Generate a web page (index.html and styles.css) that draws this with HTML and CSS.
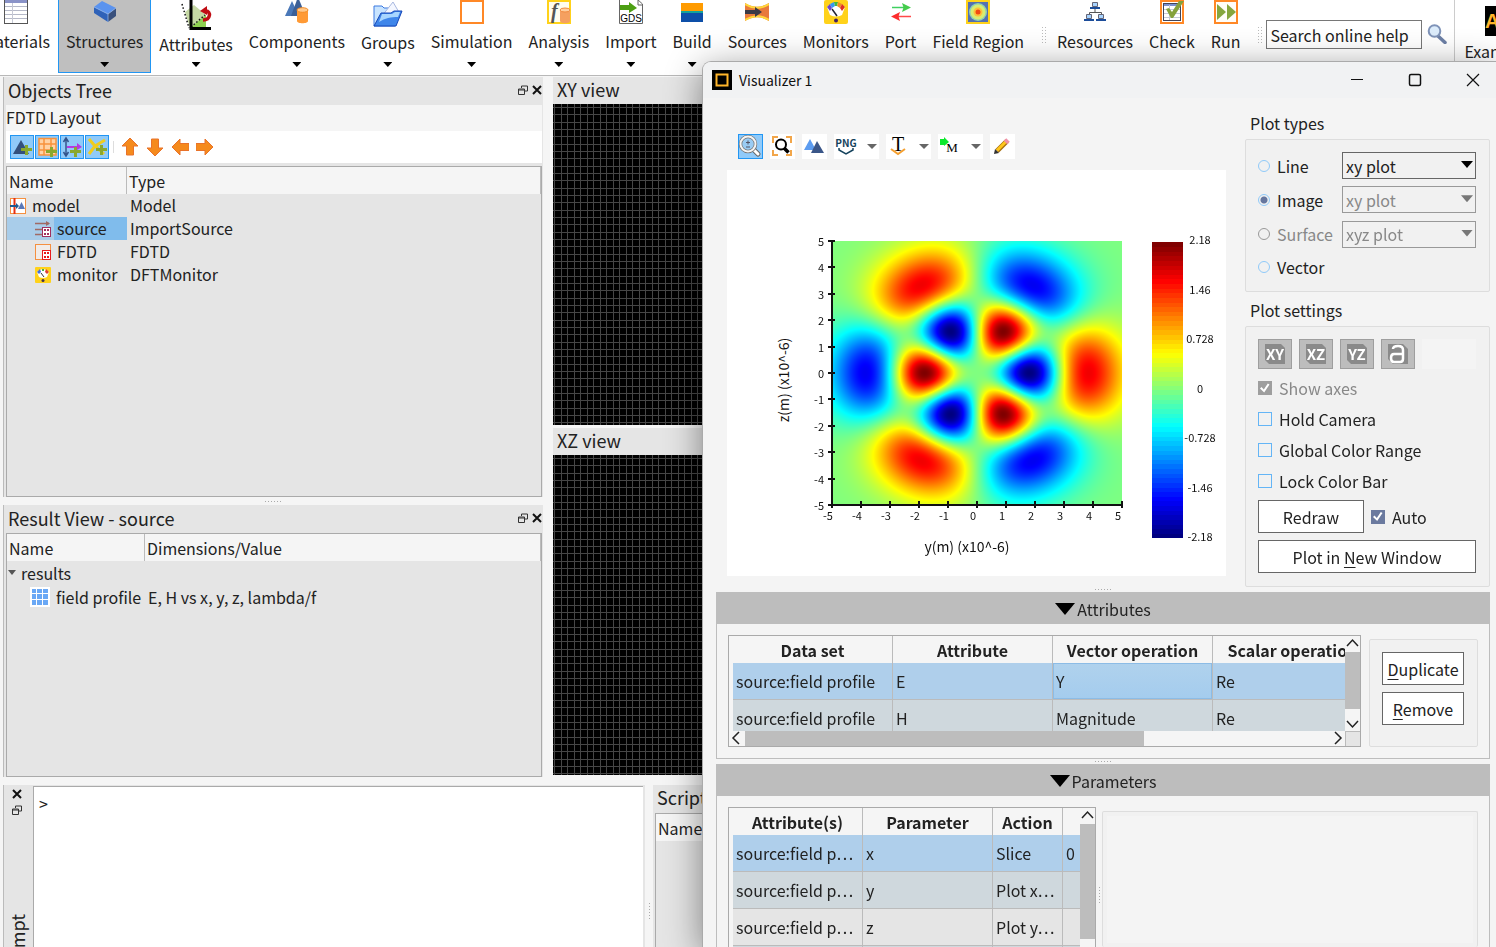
FILE: index.html
```html
<!DOCTYPE html>
<html lang="en">

<head>
    <meta charset="UTF-8">
    <title>FDTD - Visualizer 1</title>
    <link rel="stylesheet" href="styles.css">
</head>

<body>
    <header class="ribbon">
        <button class="tool tool-first">
            <svg width="24" height="24" viewBox="0 0 24 24"><rect x="0.5" y="-3" width="23" height="26.5" fill="#fff" stroke="#555"/><path d="M1 0H23V3H1Z" fill="#8a93c8"/><path d="M1 6.500H23M1 10.500H23M1 14.500H23M1 18.500H23" stroke="#b5b9c8"/><path d="M8.500 3V23" stroke="#c5c8d4"/></svg>
            <span>Materials</span>
        </button>
        <button class="tool active">
            <svg width="24" height="24" viewBox="0 0 24 24"><path d="M1 7L9 1 23 8 15 14Z" fill="#5b93ee"/><path d="M1 7L15 14V22L1 13Z" fill="#2f62b8"/><path d="M15 14L23 8V16L15 22Z" fill="#39507c"/><path d="M1 7L15 14 23 8M15 14V22" fill="none" stroke="#9cc0f5" stroke-width="0.700"/></svg>
            <span>Structures</span><i class="caret"></i>
        </button>
        <button class="tool tall">
            <svg width="32" height="30" viewBox="0 0 32 30"><path d="M10 28L5 12 14 5 26 15V28Z" fill="#c5d8a4"/><path d="M10 28L26 15V28Z" fill="#8fd052"/><path d="M2 4L9 28M11 27L25 15" stroke="#111" stroke-width="1.500" stroke-dasharray="1.500 2"/><path d="M11 0V28.500H31" fill="none" stroke="#000" stroke-width="3"/><path d="M23 20C31 20 31 11 26 11" fill="none" stroke="#c00d14" stroke-width="3.500"/><path d="M20 11L27 6V15Z" fill="#c00d14"/></svg>
            <span>Attributes</span><i class="caret"></i>
        </button>
        <button class="tool">
            <svg width="24" height="24" viewBox="0 0 24 24"><path d="M0 16L7 1 14 16Z" fill="#4a78b8"/><path d="M6 16L13 -3 20 14V16Z" fill="#3b5f96"/><path d="M12 10V21C12 24 23 24 23 21V10Z" fill="#ff9a35"/><ellipse cx="17.500" cy="10" rx="5.500" ry="2.300" fill="#ffc98c" stroke="#f58a20"/></svg>
            <span>Components</span><i class="caret"></i>
        </button>
        <button class="tool tall">
            <svg width="30" height="28" viewBox="0 0 30 28"><path d="M1 8V6H9L11 8H22V26H1Z" fill="#c8e4ff" stroke="#3a78e0"/><path d="M9 16L20 2 27 14 22 20Z" fill="#f4f7ff" stroke="#a8b8e0"/><path d="M8 13H18L21 11H29L23 26H1Z" fill="#3f86ea" stroke="#1648b8"/><path d="M9 14H19L22 12H27L25 17C18 17 12 18 6 22Z" fill="#a8d6ff"/></svg>
            <span>Groups</span><i class="caret"></i>
        </button>
        <button class="tool">
            <svg width="24" height="24" viewBox="0 0 24 24"><rect x="1" y="1" width="22" height="22" fill="#fff" stroke="#ff8826" stroke-width="2"/></svg>
            <span>Simulation</span><i class="caret"></i>
        </button>
        <button class="tool">
            <svg width="24" height="24" viewBox="0 0 24 24"><rect x="1" y="1" width="22" height="22" fill="#fffdf0" stroke="#ffd21a" stroke-width="2"/><text x="4" y="18" class="fx">f</text><path d="M13 10V21C13 24 23 24 23 21V10Z" fill="#f5a060"/><ellipse cx="18" cy="10" rx="5" ry="2" fill="#ffd0a0" stroke="#f08a40"/></svg>
            <span>Analysis</span><i class="caret"></i>
        </button>
        <button class="tool">
            <svg width="24" height="24" viewBox="0 0 24 24"><path d="M0.500 -2V23.500H23.500V4L18 -1Z" fill="#fff" stroke="#666"/><path d="M19 0V5H24" fill="none" stroke="#666"/><path d="M1 5H10V2L18 8 10 13V10H1Z" fill="#4c9f13"/><text x="12" y="22" text-anchor="middle" class="gds">GDS</text></svg>
            <span>Import</span><i class="caret"></i>
        </button>
        <button class="tool">
            <svg width="24" height="24" viewBox="0 0 24 24"><path d="M1 3H23V12H1Z" fill="#ff9b00"/><path d="M1 12H23V22H1Z" fill="#0d4fa8"/><path d="M1 11H23V13H1Z" fill="#13a59a"/></svg>
            <span>Build</span><i class="caret"></i>
        </button>
        <button class="tool">
            <svg width="24" height="24" viewBox="0 0 24 24"><path d="M0 3C8 8 16 8 24 3V21C16 16 8 16 0 21Z" fill="#e87a3c"/><path d="M0 4C8 9 16 9 24 4M0 20C8 15 16 15 24 20" fill="none" stroke="#ffd83a" stroke-width="2"/><path d="M0 10H10V7L17 12 10 17V14H0Z" fill="#3a3a46"/></svg>
            <span>Sources</span>
        </button>
        <button class="tool">
            <svg width="24" height="24" viewBox="0 0 24 24"><rect x="0" y="0" width="24" height="24" rx="2" fill="#ffd21a"/><path d="M3 7Q12 -1 21 7L18 15Q12 18 6 15Z" fill="#fff"/><path d="M3 7L6 4 8 8 6 11Z" fill="#7048c8"/><path d="M6 4L10 2 11 6 8 8Z" fill="#3898f0"/><path d="M10 2H14L13 6H11Z" fill="#40b840"/><path d="M14 2L18 4 16 8 13 6Z" fill="#f09020"/><path d="M18 4L21 7 18 11 16 8Z" fill="#e03020"/><path d="M8 9L13 16" stroke="#223" stroke-width="1.500"/><circle cx="12" cy="20.500" r="2" fill="#402060"/></svg>
            <span>Monitors</span>
        </button>
        <button class="tool">
            <svg width="24" height="24" viewBox="0 0 24 24"><path d="M3 7.500H16" stroke="#3fd060" stroke-width="1.500"/><path d="M13 3L22 7.500 13 12 14.500 7.500Z" fill="#45cc4c"/><path d="M9 16.500H22" stroke="#ff4a4a" stroke-width="1.500"/><path d="M11 12L2 16.500 11 21 9.500 16.500Z" fill="#fc2d2d"/></svg>
            <span>Port</span>
        </button>
        <button class="tool">
            <svg width="24" height="24" viewBox="0 0 24 24"><rect x="1" y="1" width="22" height="22" fill="#5470b0" stroke="#ffd21a" stroke-width="2"/><circle cx="12" cy="12" r="9" fill="#8fd0b0"/><circle cx="12" cy="12" r="7.500" fill="#d8ec70"/><circle cx="12" cy="12" r="4.500" fill="#ffbe3a"/><circle cx="12" cy="12" r="2.500" fill="#f04a12"/></svg>
            <span>Field Region</span>
        </button>
        <i class="grip"></i>
        <button class="tool">
            <svg width="24" height="24" viewBox="0 0 24 24"><path d="M12 9V12.500M6.500 15V12.500H18.500V15" fill="none" stroke="#555"/><path d="M9.500 2.500H14.500V6.500H9.500ZM3.500 14.500H8.500V18.500H3.500ZM15.500 14.500H20.500V18.500H15.500Z" fill="#a8d4ff" stroke="#667"/><path d="M7 8H17M1 20H11M13 20H23" stroke="#1c4d9a" stroke-width="2"/></svg>
            <span>Resources</span>
        </button>
        <button class="tool">
            <svg width="24" height="24" viewBox="0 0 24 24"><rect x="1" y="1" width="22" height="22" fill="#fff" stroke="#ff8826" stroke-width="2"/><rect x="3.500" y="3.500" width="17" height="17" fill="#fff" stroke="#445"/><path d="M4 5H20" stroke="#7a90d0" stroke-width="2"/><path d="M4 9.500H20M4 13.500H20M4 17.500H20M9.500 5V20" stroke="#c5cad8"/><path d="M6 9L9 8 12 12 19 1H24L13 18H11Z" fill="#85a23c"/></svg>
            <span>Check</span>
        </button>
        <button class="tool">
            <svg width="24" height="24" viewBox="0 0 24 24"><rect x="1" y="1" width="22" height="22" fill="#fffdf8" stroke="#ff8826" stroke-width="2"/><path d="M3 4L12 12 3 20ZM13 4L22 12 13 20Z" fill="#86a63e"/></svg>
            <span>Run</span>
        </button>
        <i class="grip"></i>
        <input class="help-search" type="text" value="Search online help" aria-label="Search online help">
        <button class="lens" aria-label="Search">
            <svg width="20" height="20" viewBox="0 0 20 20"><path d="M11 12L18 18.500" stroke="#6c7fa5" stroke-width="3.500" stroke-linecap="round"/><circle cx="7.500" cy="7" r="5.800" fill="#dcecfb" stroke="#7f93b8" stroke-width="2"/></svg>
        </button>
        <button class="tool examples">
            <svg width="30" height="30" viewBox="0 0 30 30"><rect width="30" height="30" fill="#000"/><text x="0" y="22" class="logo-a">A</text></svg>
            <span>Examples</span>
        </button>
    </header>

    <main class="desktop">
        <div class="work-area">
            <div class="docks">
                <section class="dock tree-dock">
                    <div class="dock-title">
                        <h2>Objects Tree</h2>
                        <button class="dock-btn" aria-label="Float"><svg width="10" height="10" viewBox="0 0 10 10"><path d="M3.500 3V1H9.500V6H7" fill="none" stroke="#333"/><path d="M0.500 4H6.500V9.500H0.500ZM0.500 5H6.500" fill="none" stroke="#333"/></svg></button>
                        <button class="dock-btn" aria-label="Close"><svg width="10" height="10" viewBox="0 0 10 10"><path d="M1 1L9 9M9 1L1 9" stroke="#111" stroke-width="2"/></svg></button>
                    </div>
                    <p class="layout-mode">FDTD Layout</p>
                    <div class="tree-tools">
                        <button class="tree-btn on" aria-label="Structures"><svg width="23" height="22" viewBox="0 0 23 22"><path d="M2 18L10 4 18 18Z" fill="#34507c"/><path d="M14 9H17V12H21V15H17V19H14V15H10V12H14Z" fill="#8aa82e"/></svg></button>
                        <button class="tree-btn on" aria-label="Simulation"><svg width="23" height="22" viewBox="0 0 23 22"><path d="M3 2.500H20V19H3ZM8 2V19M15 2V19M3 8H20M3 14H20" fill="#ffd2a4" stroke="#f8923c" stroke-width="1.500"/><path d="M14 11H17V14H21V17H17V21H14V17H10V14H14Z" fill="#8aa82e"/></svg></button>
                        <button class="tree-btn on" aria-label="Sources"><svg width="23" height="22" viewBox="0 0 23 22"><path d="M5 3V19M2.500 6L5 2 7.500 6M2.500 16L5 20 7.500 16" fill="none" stroke="#34548c" stroke-width="1.500"/><path d="M6 11H18" stroke="#b838e0" stroke-width="2"/><path d="M16 7L21 11 16 14Z" fill="#b838e0"/><path d="M13 11H16V14H20V17H16V21H13V17H9V14H13Z" fill="#8aa82e"/></svg></button>
                        <button class="tree-btn on" aria-label="Monitors"><svg width="23" height="22" viewBox="0 0 23 22"><path d="M3 3L9 10 19 4M3 18L9 10 18 18" fill="none" stroke="#f0cc20" stroke-width="3"/><path d="M14 9H17V12H21V15H17V19H14V15H10V12H14Z" fill="#8aa82e"/></svg></button>
                        <i class="tree-sep"></i>
                        <button class="tree-btn" aria-label="Up"><svg width="18" height="20" viewBox="0 0 18 20"><path d="M9 1L17 9H12.500V18H5.500V9H1Z" fill="#f58a1c" stroke="#e8722a"/></svg></button>
                        <button class="tree-btn" aria-label="Down"><svg width="18" height="20" viewBox="0 0 18 20"><path d="M9 19L17 11H12.500V2H5.500V11H1Z" fill="#f58a1c" stroke="#e8722a"/></svg></button>
                        <button class="tree-btn" aria-label="Left"><svg width="18" height="18" viewBox="0 0 18 18"><path d="M1 9L9 1V5.500H18V12.500H9V17Z" fill="#f58a1c" stroke="#e8722a"/></svg></button>
                        <button class="tree-btn" aria-label="Right"><svg width="18" height="18" viewBox="0 0 18 18"><path d="M17 9L9 1V5.500H0V12.500H9V17Z" fill="#f58a1c" stroke="#e8722a"/></svg></button>
                    </div>
                    <div class="tree-box">
                        <table class="tree">
                            <colgroup><col class="col-name"><col></colgroup>
                            <thead>
                                <tr><th>Name</th><th>Type</th></tr>
                            </thead>
                            <tbody>
                                <tr>
                                    <td><div class="node"><svg width="16" height="16" viewBox="0 0 16 16"><rect x="0.500" y="0.500" width="15" height="15" fill="#fff" stroke="#f59040"/><path d="M4.500 0V16" stroke="#e83010" stroke-width="2"/><path d="M0 8H8" stroke="#205a90" stroke-width="2"/><path d="M6 5L9 8 6 11Z" fill="#205a90"/><path d="M8 11L11.500 4 15 11Z" fill="#5a78b8"/></svg><span>model</span></div></td>
                                    <td>Model</td>
                                </tr>
                                <tr class="selected">
                                    <td><div class="node child"><svg width="16" height="16" viewBox="0 0 16 16"><path d="M0 2.500H14M0 8.500H8M0 13.500H7" stroke="#a06a64" stroke-width="1.500"/><path d="M11 0L15 2.500 11 5Z" fill="#a06a64"/><rect x="7.500" y="6.500" width="8" height="9" fill="#fff" stroke="#a03060"/><path d="M9 8H11V10H9ZM12 8H14V10H12ZM9 12H11V14H9ZM12 12H14V14H12Z" fill="#a03060"/></svg><span>source</span></div></td>
                                    <td>ImportSource</td>
                                </tr>
                                <tr>
                                    <td><div class="node child"><svg width="16" height="16" viewBox="0 0 16 16"><rect x="0.500" y="0.500" width="15" height="15" fill="#f2ece8" stroke="#f59040"/><rect x="7.500" y="6.500" width="8" height="9" fill="#fff" stroke="#e81c1c"/><path d="M9 8H11V10H9ZM12 8H14V10H12ZM9 12H11V14H9ZM12 12H14V14H12Z" fill="#e81c1c"/></svg><span>FDTD</span></div></td>
                                    <td>FDTD</td>
                                </tr>
                                <tr>
                                    <td><div class="node child"><svg width="16" height="16" viewBox="0 0 16 16"><rect width="16" height="16" rx="1" fill="#ffd21a"/><path d="M2 5Q8 -1 14 5L12 10Q8 12 4 10Z" fill="#fff"/><path d="M2 5L5 2 6 5 4 7Z" fill="#4a70d8"/><path d="M11 2L14 5 12 7 10 5Z" fill="#e04030"/><path d="M7 2H9V4H7Z" fill="#48b048"/><path d="M6 6L9 10" stroke="#333"/><circle cx="8" cy="13.500" r="1.500" fill="#403050"/></svg><span>monitor</span></div></td>
                                    <td>DFTMonitor</td>
                                </tr>
                            </tbody>
                        </table>
                    </div>
                </section>
                <i class="dots"></i>
                <section class="dock result-dock">
                    <div class="dock-title">
                        <h2>Result View - source</h2>
                        <button class="dock-btn" aria-label="Float"><svg width="10" height="10" viewBox="0 0 10 10"><path d="M3.500 3V1H9.500V6H7" fill="none" stroke="#333"/><path d="M0.500 4H6.500V9.500H0.500ZM0.500 5H6.500" fill="none" stroke="#333"/></svg></button>
                        <button class="dock-btn" aria-label="Close"><svg width="10" height="10" viewBox="0 0 10 10"><path d="M1 1L9 9M9 1L1 9" stroke="#111" stroke-width="2"/></svg></button>
                    </div>
                    <div class="tree-box">
                        <table class="tree results">
                            <colgroup><col class="col-name"><col></colgroup>
                            <thead>
                                <tr><th>Name</th><th>Dimensions/Value</th></tr>
                            </thead>
                            <tbody>
                                <tr>
                                    <td><div class="node root"><svg width="8" height="6" viewBox="0 0 8 6"><path d="M0 0H8L4 5Z" fill="#555"/></svg><span>results</span></div></td>
                                    <td></td>
                                </tr>
                                <tr>
                                    <td><div class="node leaf"><svg width="20" height="20" viewBox="0 0 20 20"><rect width="20" height="20" fill="#fff"/><path d="M2 2H6V6H2ZM7 2H12V6H7ZM13 2H18V6H13ZM2 7H6V12H2ZM7 7H12V12H7ZM13 7H18V12H13ZM2 13H6V18H2ZM7 13H12V18H7ZM13 13H18V18H13Z" fill="#6aa8f5"/></svg><span>field profile</span></div></td>
                                    <td>E, H vs x, y, z, lambda/f</td>
                                </tr>
                            </tbody>
                        </table>
                    </div>
                </section>
            </div>
            <div class="views">
                <section class="view">
                    <h2>XY view</h2>
                    <div class="grid-canvas"></div>
                </section>
                <section class="view">
                    <h2>XZ view</h2>
                    <div class="grid-canvas"></div>
                </section>
            </div>
        </div>

        <div class="console-area">
            <section class="prompt">
                <div class="prompt-strip">
                    <button class="dock-btn" aria-label="Close"><svg width="10" height="10" viewBox="0 0 10 10"><path d="M1 1L9 9M9 1L1 9" stroke="#111" stroke-width="2"/></svg></button>
                    <button class="dock-btn" aria-label="Float"><svg width="10" height="10" viewBox="0 0 10 10"><path d="M3.500 3V1H9.500V6H7" fill="none" stroke="#333"/><path d="M0.500 4H6.500V9.500H0.500ZM0.500 5H6.500" fill="none" stroke="#333"/></svg></button>
                    <span class="prompt-title">Script Prompt</span>
                </div>
                <textarea class="prompt-text" aria-label="Script Prompt">&gt;</textarea>
            </section>
            <i class="dots dots-v"></i>
            <section class="workspace">
                <h2>Script Workspace</h2>
                <table class="workspace-table">
                    <thead><tr><th>Name</th></tr></thead>
                    <tbody><tr><td></td></tr></tbody>
                </table>
            </section>
        </div>

        <section class="window">
            <div class="titlebar">
                <svg width="20" height="20" viewBox="0 0 20 20"><rect width="20" height="20" fill="#000"/><rect x="4.500" y="4.500" width="11" height="11" fill="none" stroke="#ffb52a" stroke-width="2"/></svg>
                <h1>Visualizer 1</h1>
                <button class="win-btn" aria-label="Minimize"><svg width="14" height="14" viewBox="0 0 14 14"><path d="M1 6.500H13" stroke="#111"/></svg></button>
                <button class="win-btn" aria-label="Maximize"><svg width="14" height="14" viewBox="0 0 14 14"><rect x="1.500" y="1.500" width="11" height="11" rx="1.500" fill="none" stroke="#111" stroke-width="1.500"/></svg></button>
                <button class="win-btn" aria-label="Close"><svg width="14" height="14" viewBox="0 0 14 14"><path d="M1 1L13 13M13 1L1 13" stroke="#111" stroke-width="1.200"/></svg></button>
            </div>

            <div class="plot-row">
                <div class="plot-side">
                    <div class="plot-tools">
                        <button class="ptool on" aria-label="Zoom"><svg width="25" height="25" viewBox="0 0 25 25"><path d="M14 14L20 20" stroke="#666" stroke-width="5" stroke-linecap="round"/><path d="M14 14L20 20" stroke="#fff" stroke-width="3" stroke-linecap="round"/><circle cx="10" cy="10" r="7.500" fill="#9accf4" stroke="#777" stroke-width="3.500"/><circle cx="10" cy="10" r="7.500" fill="none" stroke="#f4f4f4" stroke-width="2"/><path d="M8 8.500H12M10 6.500V10.500M8 13H12" stroke="#556"/></svg></button>
                        <button class="ptool" aria-label="Zoom extent"><svg width="25" height="25" viewBox="0 0 25 25"><path d="M3 9V3H8M16 3H21V9M21 16V21H16M8 21H3V16" fill="none" stroke="#f2a64a" stroke-width="2"/><circle cx="11" cy="10.500" r="5" fill="none" stroke="#000" stroke-width="2"/><path d="M14 14L18.500 18.500" stroke="#000" stroke-width="3.500"/></svg></button>
                        <button class="ptool" aria-label="Objects"><svg width="25" height="25" viewBox="0 0 25 25"><path d="M2 16L8 5 14 16Z" fill="#5c9cf0"/><path d="M9 19L15 7 22 19Z" fill="#3a5688"/></svg></button>
                        <button class="ptool wide" aria-label="Export picture"><svg width="45" height="25" viewBox="0 0 45 25"><text x="12" y="13" text-anchor="middle" class="png">PNG</text><path d="M5 14V16L12 20 19 16V14" fill="none" stroke="#14425c" stroke-width="1.500"/><path d="M33 10H43L38 15Z" fill="#666"/></svg></button>
                        <button class="ptool wide" aria-label="Export text"><svg width="45" height="25" viewBox="0 0 45 25"><text x="12" y="17" text-anchor="middle" class="ttt">T</text><path d="M5 15L12 20 19 15" fill="none" stroke="#f5a030" stroke-width="2"/><path d="M33 10H43L38 15Z" fill="#666"/></svg></button>
                        <button class="ptool wide" aria-label="Export to Matlab"><svg width="45" height="25" viewBox="0 0 45 25"><path d="M2 5H6V3L11 8 6 12V11H2Z" fill="#0ce82c"/><text x="14" y="18" text-anchor="middle" class="mmm">M</text><path d="M33 10H43L38 15Z" fill="#666"/></svg></button>
                        <button class="ptool" aria-label="Edit"><svg width="25" height="25" viewBox="0 0 25 25"><path d="M7 17L17 7" stroke="#a87010" stroke-width="5"/><path d="M7 16.500L16 7.500" stroke="#ffc61c" stroke-width="3"/><path d="M15.500 8.500L18 6" stroke="#f090a8" stroke-width="5"/><path d="M4 20L5 15 9 19Z" fill="#333"/></svg></button>
                    </div>
                    <div class="plot">
                        <svg id="chart" width="499" height="406" viewBox="0 0 499 406">
                            <foreignObject x="105" y="71" width="290" height="264"><canvas id="field" width="290" height="264"></canvas></foreignObject>
                            <path class="axis" d="M105 71V335H395"/>
                            <g id="ticks"></g>
                            <g id="colorbar"></g>
                            <text class="axis-name" x="240" y="382" text-anchor="middle">y(m) (x10^-6)</text>
                            <text class="axis-name" transform="translate(62 210) rotate(-90)" text-anchor="middle">z(m) (x10^-6)</text>
                        </svg>
                    </div>
                </div>
                <form class="plot-options">
                    <h3>Plot types</h3>
                    <div class="group types">
                        <label><input type="radio" name="type">Line</label>
                        <div class="pick"><select aria-label="Line plot"><option>xy plot</option></select></div>
                        <label><input type="radio" name="type" checked>Image</label>
                        <div class="pick off"><select aria-label="Image plot" disabled><option>xy plot</option></select></div>
                        <label class="off"><input type="radio" name="type" disabled>Surface</label>
                        <div class="pick off"><select aria-label="Surface plot" disabled><option>xyz plot</option></select></div>
                        <label><input type="radio" name="type">Vector</label>
                    </div>
                    <h3>Plot settings</h3>
                    <div class="group settings">
                        <div class="planes">
                            <button type="button" class="plane" disabled><span>XY</span></button>
                            <button type="button" class="plane" disabled><span>XZ</span></button>
                            <button type="button" class="plane" disabled><span>YZ</span></button>
                            <button type="button" class="plane" aria-label="Lock" disabled><svg width="20" height="20" viewBox="0 0 20 20"><path d="M0 0H15L20 5V20H5L0 15Z" fill="#8a8a8a"/><path d="M5 5Q5 2 10 2Q15 2 15 6V15Q15 18 12 18H6Q3 18 3 14Q3 10 6 10H15" fill="none" stroke="#fff" stroke-width="2.500"/></svg></button>
                            <i class="plane-blank"></i>
                        </div>
                        <label class="off"><input type="checkbox" checked disabled>Show axes</label>
                        <label><input type="checkbox">Hold Camera</label>
                        <label><input type="checkbox">Global Color Range</label>
                        <label><input type="checkbox">Lock Color Bar</label>
                        <div class="redraw">
                            <button type="button" class="btn">Redraw</button>
                            <label><input type="checkbox" checked>Auto</label>
                        </div>
                        <button type="button" class="btn">Plot in <u>N</u>ew Window</button>
                    </div>
                </form>
            </div>

            <i class="dots"></i>
            <section class="panel attributes">
                <button class="panel-head"><svg width="20" height="12" viewBox="0 0 20 12"><path d="M0 0H20L10 12Z"/></svg>Attributes</button>
                <div class="panel-body">
                    <div class="sheet">
                        <div class="sheet-view">
                            <table class="data attr-table">
                                <thead>
                                    <tr><th>Data set</th><th>Attribute</th><th>Vector operation</th><th>Scalar operation</th></tr>
                                </thead>
                                <tbody>
                                    <tr class="picked"><td>source:field profile</td><td>E</td><td class="current">Y</td><td>Re</td></tr>
                                    <tr class="alt"><td>source:field profile</td><td>H</td><td>Magnitude</td><td>Re</td></tr>
                                </tbody>
                            </table>
                        </div>
                        <div class="vbar"><svg width="15" height="16" viewBox="0 0 15 16"><path d="M2 10L7.500 4 13 10"/></svg><i></i><svg width="15" height="22" viewBox="0 0 15 22"><path d="M2 12L7.500 18 13 12"/></svg></div>
                        <div class="hbar"><svg width="16" height="15" viewBox="0 0 16 15"><path d="M10 1L4 7 10 13"/></svg><i></i><svg width="16" height="15" viewBox="0 0 16 15"><path d="M6 1L12 7 6 13"/></svg></div>
                        <div class="corner"></div>
                    </div>
                    <div class="group set-buttons">
                        <button class="btn"><u>D</u>uplicate</button>
                        <button class="btn"><u>R</u>emove</button>
                    </div>
                </div>
            </section>
            <i class="dots"></i>
            <section class="panel parameters">
                <button class="panel-head"><svg width="20" height="12" viewBox="0 0 20 12"><path d="M0 0H20L10 12Z"/></svg>Parameters</button>
                <div class="panel-body">
                    <div class="sheet">
                        <div class="sheet-view">
                            <table class="data param-table">
                                <thead>
                                    <tr><th>Attribute(s)</th><th>Parameter</th><th>Action</th><th></th></tr>
                                </thead>
                                <tbody>
                                    <tr class="picked"><td>source:field p…</td><td>x</td><td>Slice</td><td>0</td></tr>
                                    <tr class="alt"><td>source:field p…</td><td>y</td><td>Plot x…</td><td></td></tr>
                                    <tr><td>source:field p…</td><td>z</td><td>Plot y…</td><td></td></tr>
                                    <tr class="alt"><td></td><td></td><td></td><td></td></tr>
                                </tbody>
                            </table>
                        </div>
                        <div class="vbar"><svg width="15" height="16" viewBox="0 0 15 16"><path d="M2 10L7.500 4 13 10"/></svg><i></i></div>
                    </div>
                    <i class="dots dots-v"></i>
                    <div class="group slice-box"></div>
                </div>
            </section>
        </section>
    </main>

    <script src="script.js"></script>
</body>

</html>
```
FILE: styles.css
```css
* {
    box-sizing: border-box;
}

body {
    margin: 0;
    height: 100vh;
    display: flex;
    flex-direction: column;
    overflow: hidden;
    background: #f5f5f5;
    color: #222;
    font-family: "Noto Sans CJK KR", "Noto Sans", sans-serif;
    font-size: 16px;
    line-height: 24px;
}

button, input, select, textarea {
    font: inherit;
    color: inherit;
    border-radius: 0;
}

button {
    padding: 0;
    border: none;
    background: none;
    white-space: nowrap;
}

h1, h2, h3, p {
    margin: 0;
    font-size: inherit;
    font-weight: normal;
}

svg {
    display: block;
    flex: none;
}

i {
    flex: none;
}

/* ribbon */
.ribbon {
    display: flex;
    flex: none;
    height: 76px;
    overflow: hidden;
    background: #fff;
    border-bottom: 1px solid #b8b8b8;
}

.tool {
    display: flex;
    flex: none;
    flex-direction: column;
    align-items: center;
    gap: 5px;
    height: 73px;
    padding: 0 7px;
    border: 1px solid transparent;
    border-top: none;
}

.tool.tall {
    gap: 2px;
}

.tool-first {
    margin-left: -26px;
}

.tool.active {
    background: #bfbfbf;
    border-color: #2196f3;
}

.caret {
    width: 9px;
    height: 5px;
    margin: auto 0 5px;
    background: #000;
    clip-path: polygon(0 0, 100% 0, 50% 100%);
}

.grip {
    width: 5px;
    height: 18px;
    margin: 26px 3px 0 9px;
    background-image: radial-gradient(circle, #bbb 1px, transparent 1px);
    background-size: 3px 3px;
}

.help-search {
    width: 156px;
    height: 29px;
    margin: 20px 5px 0 1px;
    padding: 0 3px;
    border: 1px solid #777;
    background: #fff;
}

.lens {
    height: 20px;
    margin: 24px 7px 0 0;
}

.tool.examples {
    flex: none;
    gap: 3px;
    height: 76px;
    padding: 6px 9px 0;
    border: none;
    border-left: 1px solid #ccc;
}

.fx {
    font: italic bold 20px "Liberation Serif", serif;
    fill: #555;
}

.gds {
    font: 10px "Liberation Sans", sans-serif;
}

.logo-a {
    font: bold 20px "Liberation Sans", sans-serif;
    fill: #ffb52a;
}

/* docks */
.desktop {
    display: flex;
    flex: 1;
    flex-direction: column;
    min-height: 0;
    padding-left: 3px;
    padding-top: 1px;
}

.work-area {
    display: flex;
    flex: none;
    gap: 10px;
    height: 700px;
}

.docks {
    display: flex;
    flex-direction: column;
    width: 540px;
}

.dock {
    display: flex;
    flex-direction: column;
    padding: 0 1px 0 2px;
    background: #e5e5e5;
    border-left: 1px solid #bbb;
}

.tree-dock {
    height: 420px;
}

.result-dock {
    flex: 1;
}

.dock-title {
    display: flex;
    flex: none;
    align-items: center;
    gap: 4px;
    height: 28px;
    padding: 0 0 2px 2px;
}

.dock-title h2 {
    flex: 1;
}

.dock h2, .view h2, .workspace h2 {
    font-size: 18px;
}

.layout-mode {
    flex: none;
    height: 26px;
    background: #f5f5f5;
}

.tree-tools {
    display: flex;
    flex: none;
    align-items: center;
    gap: 1px;
    height: 32px;
    padding-left: 4px;
    background: #fff;
}

.tree-btn {
    display: flex;
    align-items: center;
    justify-content: center;
    width: 24px;
    height: 24px;
}

.tree-btn.on {
    background: #90caf9;
    border: 1px solid #2196f3;
}

.tree-sep {
    width: 1px;
    height: 12px;
    margin: 0 3px;
    background: #ddd;
}

.tree-box {
    flex: 1;
    border: 1px solid #aaa;
    overflow: hidden;
}

.tree-dock .tree-box {
    margin-top: 3px;
}

.tree {
    width: 100%;
    table-layout: fixed;
    border-spacing: 0;
    white-space: nowrap;
}

.tree .col-name {
    width: 120px;
}

.results .col-name {
    width: 138px;
}

.tree th {
    height: 27px;
    padding: 0 2px;
    text-align: left;
    font-weight: normal;
    background: #f5f5f5;
    border-right: 1px solid #bbb;
}

.tree td {
    height: 23px;
    padding: 0 3px;
    line-height: 23px;
}

.results td {
    height: 24px;
}

.node {
    display: flex;
    align-items: center;
    gap: 6px;
}

.node.child {
    margin-left: -3px;
    padding-left: 28px;
    gap: 3px;
}

.node.child span {
    flex: 1;
    padding-left: 3px;
}

.selected .node.child {
    margin-right: -3px;
    background: #a9cdea;
}

.selected .node.child span {
    background: #80bcec;
}

.node.root {
    margin-left: -2px;
    gap: 5px;
}

.node.leaf {
    padding-left: 20px;
}

.dots {
    align-self: center;
    width: 17px;
    height: 1px;
    margin: 4px 0 3px;
    background: repeating-linear-gradient(90deg, #aaa 0 1px, transparent 1px 3px);
}

.dots-v {
    width: 1px;
    height: 17px;
    margin: 0 4px;
    background: repeating-linear-gradient(#aaa 0 1px, transparent 1px 3px);
}

/* views */
.views {
    display: flex;
    flex: 1;
    flex-direction: column;
    gap: 3px;
    padding-bottom: 2px;
}

.view {
    display: flex;
    flex: 1;
    flex-direction: column;
    background: #e5e5e5;
}

.view h2 {
    height: 27px;
    padding-left: 4px;
    line-height: 25px;
}

.grid-canvas {
    flex: 1;
    background:
        linear-gradient(90deg, #464646 0 1px, transparent 1px 7px, #464646 7px 8px, transparent 8px) 1px 0 / 13px 22px,
        linear-gradient(#464646 0 1px, transparent 1px 7px, #464646 7px 8px, transparent 8px 15px, #464646 15px 16px, transparent 16px) 0 3px / 13px 22px,
        #000;
}

/* script prompt */
.console-area {
    display: flex;
    flex: 1;
    min-height: 0;
    margin-top: 8px;
}

.prompt {
    display: flex;
    width: 642px;
    background: #e5e5e5;
    border-left: 1px solid #bbb;
}

.prompt-strip {
    display: flex;
    flex-direction: column;
    align-items: center;
    gap: 6px;
    width: 29px;
    padding: 4px 4px 0 0;
    overflow: hidden;
}

.dock-btn {
    height: 10px;
}

.prompt-title {
    margin-top: 93px;
    writing-mode: vertical-rl;
    transform: rotate(180deg);
    font-size: 18px;
    white-space: nowrap;
}

.prompt-text {
    flex: 1;
    margin: 1px 2px 0 0;
    padding: 4px 5px;
    border: 1px solid #aaa;
    border-width: 1px 0 0 1px;
    background: #fff;
    resize: none;
}

.console-area > .dots-v {
    align-self: flex-start;
    margin: 118px 3px 0 4px;
}

.workspace {
    flex: 1;
    min-height: 0;
    padding-left: 2px;
    background: #e5e5e5;
}

.workspace h2 {
    height: 28px;
    padding-left: 2px;
    line-height: 25px;
}

.workspace-table {
    width: 100%;
    border: 1px solid #aaa;
    border-spacing: 0;
}

.workspace-table th {
    height: 27px;
    padding: 0 2px;
    text-align: left;
    font-weight: normal;
    background: #f5f5f5;
}

.workspace-table td {
    height: 160px;
}

/* visualizer window */
.window {
    position: absolute;
    left: 702px;
    right: 0;
    top: 61px;
    bottom: 0;
    display: flex;
    flex-direction: column;
    padding: 0 6px 0 13px;
    overflow: hidden;
    background: #f4f4f4;
    border: 1px solid #aaa;
    border-width: 1px 0 0 1px;
    border-radius: 9px 0 0 0;
    box-shadow: 0 8px 36px rgba(0, 0, 0, 0.45);
}

.titlebar {
    display: flex;
    flex: none;
    align-items: center;
    height: 36px;
    margin: 0 -6px 0 -13px;
    padding-left: 9px;
    background: #f1f2f3;
}

.titlebar h1 {
    flex: 1;
    margin-left: 7px;
    font-size: 14px;
    color: #111;
}

.win-btn {
    display: flex;
    align-items: center;
    justify-content: center;
    width: 58px;
    height: 36px;
}

.win-btn:last-child {
    margin-right: -6px;
}

.plot-row {
    display: flex;
    flex: none;
    gap: 19px;
    padding: 13px 0 0 11px;
}

.plot-side {
    display: flex;
    flex: 1;
    flex-direction: column;
    min-width: 0;
}

.plot-tools {
    display: flex;
    gap: 7px;
    margin: 23px 0 11px 11px;
}

.ptool {
    width: 25px;
    height: 25px;
    background: #fff;
}

.ptool.wide {
    width: 45px;
}

.ptool.on {
    background: #90caf9;
    outline: 1px solid #2196f3;
    outline-offset: -1px;
}

.png {
    font: bold 10px "Noto Sans CJK KR", sans-serif;
    fill: #14425c;
}

.ttt {
    font: 20px "Liberation Serif", serif;
}

.mmm {
    font: 13px "Liberation Serif", serif;
}

.plot {
    background: #fff;
}

.axis {
    fill: none;
    stroke: #111;
    stroke-width: 2;
}

.tick {
    font-size: 11px;
    fill: #111;
}

.axis-name {
    font-size: 14px;
    fill: #111;
}

foreignObject canvas {
    display: block;
}

.plot-options {
    display: flex;
    flex-direction: column;
    width: 245px;
}

.plot-options h3 {
    height: 28px;
    padding-left: 5px;
    line-height: 25px;
}

.plot-options .types {
    margin-bottom: 6px;
}

.group {
    border: 1px solid #ddd;
    border-radius: 2px;
    background: #f1f1f1;
}

.types {
    display: grid;
    grid-template-columns: 78px 1fr;
    gap: 7px 6px;
    height: 153px;
    padding: 12px 13px 12px 12px;
}

label {
    display: flex;
    align-items: center;
    gap: 7px;
}

label.off, .pick.off {
    color: #888;
}

input[type="radio"] {
    appearance: none;
    width: 12px;
    height: 12px;
    margin: 0;
    border: 1px solid #90caf9;
    border-radius: 50%;
}

input[type="radio"]:checked {
    background: radial-gradient(circle, #66779f 3px, transparent 4px);
}

input[type="radio"]:disabled {
    border-color: #999;
}

.pick {
    position: relative;
}

.pick::after {
    content: "";
    position: absolute;
    right: 3px;
    top: 9px;
    width: 12px;
    height: 7px;
    background: #000;
    clip-path: polygon(0 0, 100% 0, 50% 100%);
    pointer-events: none;
}

.pick.off::after {
    background: #777;
}

.pick select {
    display: block;
    appearance: none;
    width: 100%;
    height: 27px;
    padding: 0 3px;
    border: 1px solid #666;
    background: transparent;
    opacity: 1;
}

.pick.off select {
    border-color: #999;
}

.settings {
    display: flex;
    flex-direction: column;
    gap: 7px;
    padding: 12px 13px 13px 12px;
}

.planes {
    display: flex;
    gap: 7px;
}

.plane {
    display: flex;
    align-items: center;
    justify-content: center;
    width: 34px;
    height: 30px;
    background: #bdbdbd;
    border: 1px solid #9e9e9e;
}

.plane span {
    width: 20px;
    height: 20px;
    background: #8a8a8a;
    clip-path: polygon(0 0, 80% 0, 100% 20%, 100% 100%, 20% 100%, 0 80%);
    color: #fff;
    font-size: 15px;
    font-weight: bold;
    line-height: 20px;
}

.plane-blank {
    flex: 1;
    background: #f4f4f4;
}

input[type="checkbox"] {
    appearance: none;
    width: 14px;
    height: 14px;
    margin: 0;
    border: 1px solid #64b5f6;
}

input[type="checkbox"]:checked {
    background: #6b7a9f;
    border: none;
}

input[type="checkbox"]:checked::before {
    content: "";
    display: block;
    width: 10px;
    height: 10px;
    margin: 2px;
    background: #fff;
    clip-path: polygon(0 55%, 15% 40%, 38% 65%, 78% 5%, 95% 15%, 42% 95%);
}

input[type="checkbox"]:checked:disabled {
    background: #9e9e9e;
}

.redraw {
    display: flex;
    gap: 7px;
}

.redraw .btn {
    width: 106px;
}

.btn {
    height: 33px;
    background: #fff;
    border: 1px solid #666;
}

u {
    text-underline-offset: 3px;
}

/* collapsible panels */
.window > .dots {
    margin: 2px 0;
}

.panel {
    border: 1px solid #bdbdbd;
}

.panel-head {
    display: flex;
    align-items: center;
    justify-content: center;
    gap: 2px;
    width: 100%;
    height: 31px;
    background: #bdbdbd;
}

.panel-body {
    display: flex;
    padding: 11px;
}

.attributes {
    flex: none;
}

.parameters {
    display: flex;
    flex: 1;
    flex-direction: column;
    min-height: 0;
    border-bottom: none;
}

.parameters .panel-head {
    flex: none;
}

.parameters .panel-body {
    flex: 1;
    min-height: 0;
    padding-bottom: 0;
}

.sheet {
    display: grid;
    border: 1px solid #aaa;
    background: #f5f5f5;
}

.attributes .sheet {
    flex: 1;
    grid-template-columns: 1fr 15px;
    grid-template-rows: 95px 15px;
}

.parameters .sheet {
    flex: none;
    grid-template-columns: 351px 15px;
    grid-template-rows: minmax(0, 1fr);
    width: 368px;
    border-bottom: none;
}

.sheet-view {
    min-width: 0;
    padding-left: 4px;
    overflow: hidden;
}

.data {
    table-layout: fixed;
    width: 640px;
    border-spacing: 0;
    white-space: nowrap;
}

.data th, .data td {
    padding: 0 3px;
    border-right: 1px solid #bbb;
    overflow: hidden;
}

.data th {
    height: 27px;
    font-weight: bold;
}

.data td {
    height: 37px;
    border-bottom: 1px solid #bbb;
    background: #e5e5e5;
}

.data .picked td {
    background: #afcfeb;
}

.data .alt td {
    background: #cfd8dd;
}

.data .picked .current {
    background: linear-gradient(#b0d2ed, #a4ccee);
    box-shadow: inset 0 0 0 1px #8cbce6;
}

.param-table {
    width: 430px;
}

.param-table th:nth-child(-n+2) {
    width: 130px;
}

.param-table th:nth-child(3) {
    width: 70px;
}

.vbar {
    display: flex;
    flex-direction: column;
}

.vbar i, .hbar i {
    background: #bdbdbd;
}

.vbar i {
    flex: 1;
}

.parameters .vbar i {
    flex: 0 1 115px;
}

.hbar {
    display: flex;
    justify-content: space-between;
}

.hbar i {
    width: 399px;
    margin-right: auto;
}

.vbar path, .hbar path {
    fill: none;
    stroke: #222;
    stroke-width: 1.5;
}

.corner {
    background: #e5e5e5;
    border: 1px solid #bbb;
    border-width: 1px 0 0 1px;
}

.set-buttons {
    display: flex;
    flex-direction: column;
    gap: 7px;
    width: 109px;
    margin: 4px 0 0 8px;
    padding: 12px 13px 12px 12px;
}

.parameters .dots-v {
    margin: 80px 2px 0 3px;
    align-self: flex-start;
}

.slice-box {
    flex: 1;
    margin-top: 4px;
    border-bottom: none;
    background: #f4f4f4;
    box-shadow: inset 0 0 0 4px #f1f1f1;
}
```
FILE: script.js
```js
const SVG = 'http://www.w3.org/2000/svg';
const PEAK = 2.18;

function jet(t) {
    const c = k => Math.round(255 * Math.max(0, Math.min(1, 1.5 - Math.abs(4 * t - k))));
    return [c(3), c(2), c(1)];
}

// mode profile: three-fold angular order, one radial node
function mode(y, z) {
    const r2 = y * y + z * z;
    const rho = r2 / 2.03;
    const angle = Math.atan2(z, y);
    return -Math.pow(rho, 1.5) * (4 - rho) * Math.exp(-rho / 2) * Math.cos(3 * angle);
}

function drawField() {
    const canvas = document.getElementById('field');
    const ctx = canvas.getContext('2d');
    const w = canvas.width, h = canvas.height;
    const img = ctx.createImageData(w, h);
    for (let j = 0; j < h; j++) {
        for (let i = 0; i < w; i++) {
            const y = -5 + 10 * i / (w - 1);
            const z = 5 - 10 * j / (h - 1);
            const rgb = jet((mode(y, z) / PEAK + 1) / 2);
            img.data.set([...rgb, 255], 4 * (j * w + i));
        }
    }
    ctx.putImageData(img, 0, 0);
}

function add(parent, tag, attrs, text) {
    const el = document.createElementNS(SVG, tag);
    for (const key in attrs) el.setAttribute(key, attrs[key]);
    if (text !== undefined) el.textContent = text;
    parent.appendChild(el);
}

function drawTicks() {
    const g = document.getElementById('ticks');
    for (let v = -5; v <= 5; v++) {
        const x = Math.round(105 + (v + 5) * 29);
        const y = Math.round(335 - (v + 5) * 26.4);
        add(g, 'path', { class: 'axis', d: `M${x} 331V338M101 ${y}H108` });
        add(g, 'text', { class: 'tick', x: x - 4, y: 350, 'text-anchor': 'middle' }, v);
        add(g, 'text', { class: 'tick', x: 97, y: y + 5, 'text-anchor': 'end' }, v);
    }
}

function drawColorbar() {
    const g = document.getElementById('colorbar');
    for (let k = 0; k < 64; k++) {
        add(g, 'rect', {
            x: 425, y: 72 + (63 - k) * 4.625, width: 31, height: 5,
            fill: `rgb(${jet(k / 63)})`, 'shape-rendering': 'crispEdges'
        });
    }
    ['2.18', '1.46', '0.728', '0', '-0.728', '-1.46', '-2.18'].forEach((label, k) => {
        add(g, 'text', { class: 'tick', x: 473, y: 74 + k * 49.5, 'text-anchor': 'middle' }, label);
    });
}

drawField();
drawTicks();
drawColorbar();
```
